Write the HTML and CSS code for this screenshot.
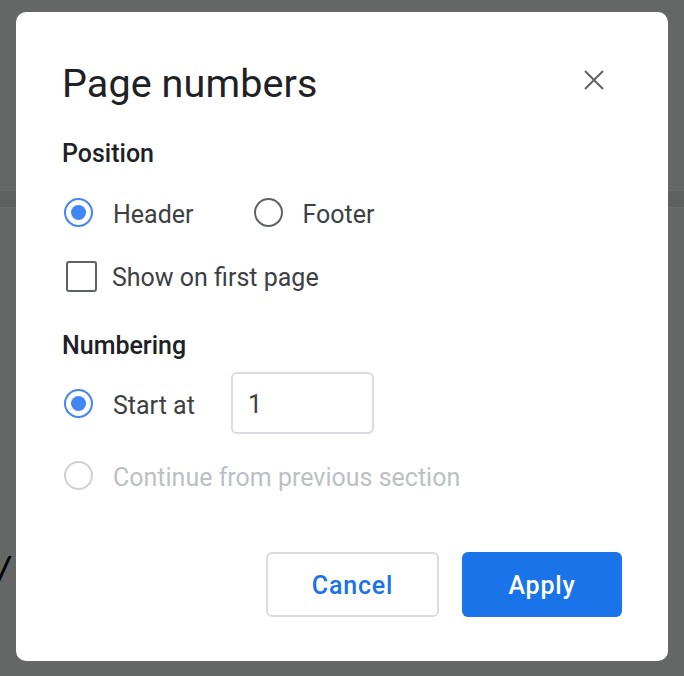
FILE: index.html
```html
<!DOCTYPE html>
<html lang="en">
<head>
<meta charset="utf-8">
<title>Page numbers</title>
<link rel="stylesheet" href="styles.css">
</head>
<body>
<div class="page">
  <div class="toolbar"></div>
  <div class="ruler"></div>
  <div class="doc"><span class="doc-text">/</span></div>
</div>

<div class="dialog" role="dialog" aria-labelledby="dlg-title">
  <div class="dialog-head">
    <h1 id="dlg-title" class="title">Page numbers</h1>
    <button class="close" aria-label="Close">
      <svg viewBox="0 0 20 20" width="20" height="20"><path d="M1 1 L19 19 M19 1 L1 19" stroke="#5f6368" stroke-width="2" fill="none"/></svg>
    </button>
  </div>

  <h2 class="section section-position">Position</h2>
  <div class="row row-position">
    <label class="option"><span class="radio checked"></span><span class="label">Header</span></label>
    <label class="option option-footer"><span class="radio"></span><span class="label">Footer</span></label>
  </div>
  <div class="row row-check">
    <label class="option"><span class="checkbox"></span><span class="label label-check">Show on first page</span></label>
  </div>

  <h2 class="section section-numbering">Numbering</h2>
  <div class="row row-start">
    <label class="option"><span class="radio checked"></span><span class="label">Start at</span></label>
    <div class="input">1</div>
  </div>
  <div class="row row-continue">
    <label class="option disabled"><span class="radio"></span><span class="label">Continue from previous section</span></label>
  </div>

  <div class="actions">
    <button class="btn btn-cancel">Cancel</button>
    <button class="btn btn-apply">Apply</button>
  </div>
</div>
</body>
</html>
```

FILE: styles.css
```css
* { box-sizing: border-box; }
html, body { margin: 0; padding: 0; }
body {
  width: 684px;
  height: 676px;
  overflow: hidden;
  background: #656666;
  font-family: Roboto, "Liberation Sans", sans-serif;
  position: relative;
}
.page { display: flex; flex-direction: column; }
.toolbar { height: 190px; background: #656666; }
.ruler {
  height: 18px;
  background: #5f6161;
  border-top: 1px solid #6b6d6d;
  border-bottom: 1px solid #6b6d6d;
}
.doc { padding-top: 344px; height: 468px; }
.doc-text {
  display: block;
  font-family: "Liberation Sans", sans-serif;
  font-size: 40px;
  line-height: 40px;
  color: #000;
  margin-left: -3px;
  font-style: italic;
}

.dialog {
  position: absolute;
  left: 16px;
  top: 12px;
  width: 652px;
  height: 649px;
  background: #fff;
  border-radius: 10px;
  padding: 48px 46px 44px 46px;
  display: flex;
  flex-direction: column;
}
.dialog-head {
  display: flex;
  justify-content: space-between;
  align-items: flex-start;
}
.title {
  margin: 0;
  font-size: 39.5px;
  line-height: 48px;
  font-weight: 400;
  color: #202124;
  letter-spacing: 0.1px;
}
.close {
  border: 0;
  background: none;
  padding: 0;
  width: 20px;
  height: 20px;
  margin-top: 10px;
  margin-right: 18px;
  display: flex;
}
.section {
  margin: 0;
  font-size: 25px;
  line-height: 32px;
  font-weight: 500;
  color: #202124;
}
.section-position { margin-top: 30px; }
.section-numbering { margin-top: 34px; }

.row { display: flex; align-items: center; }
.row-position { margin-top: 22px; height: 40px; }
.row-check { margin-top: 24px; height: 40px; }
.row-start { margin-top: 10px; height: 62px; }
.row-continue { margin-top: 21px; height: 40px; }

.option { display: flex; align-items: center; }
.option-footer { margin-left: 58px; }
.label {
  font-size: 25px;
  line-height: 32px;
  color: #3c4043;
  margin-left: 20px;
  padding-top: 5px;
}
.label-check { margin-left: 15px; padding-top: 4px; }

.radio {
  width: 29px;
  height: 29px;
  margin-left: 2px;
  border-radius: 50%;
  border: 2px solid #5f6368;
  display: flex;
  align-items: center;
  justify-content: center;
}
.radio.checked { border: 2.5px solid #4285f4; }
.radio.checked::after {
  content: "";
  width: 15px;
  height: 15px;
  border-radius: 50%;
  background: #4285f4;
}
.disabled .radio { border-color: #cfd1d4; }
.disabled .label { color: #bcbfc3; }

.checkbox {
  width: 31px;
  height: 31px;
  margin-left: 4px;
  border: 2px solid #5f6368;
  border-radius: 3px;
}

.input {
  width: 143px;
  height: 62px;
  margin-left: 36px;
  border: 2px solid #dadce0;
  border-radius: 6px;
  padding-left: 15px;
  padding-top: 2px;
  display: flex;
  align-items: center;
  font-size: 25px;
  color: #3c4043;
}

.actions {
  margin-top: auto;
  display: flex;
  justify-content: flex-end;
  gap: 23px;
}
.btn {
  height: 65px;
  border-radius: 6px;
  font-family: Roboto, "Liberation Sans", sans-serif;
  font-size: 25px;
  font-weight: 500;
  letter-spacing: 0.8px;
  padding-top: 3px;
  cursor: pointer;
}
.btn-cancel {
  width: 173px;
  background: #fff;
  border: 2px solid #dadce0;
  color: #1a73e8;
}
.btn-apply {
  width: 160px;
  background: #1a73e8;
  border: 0;
  color: #fff;
}
```
